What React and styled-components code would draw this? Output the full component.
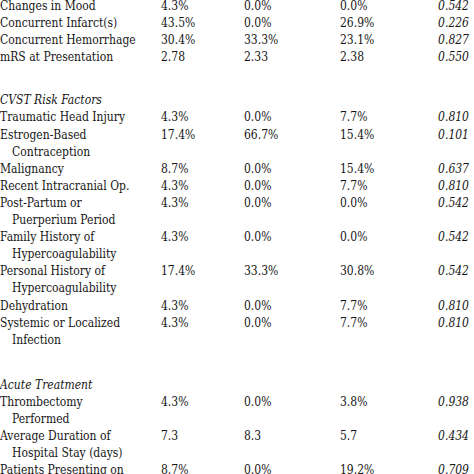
import React from "react";
import styled, { createGlobalStyle } from "styled-components";

const GlobalStyles = createGlobalStyle`
	html, body {
		margin: 0;
		padding: 0;
		background: #ffffff;
	}
	body {
		font-family: "DejaVu Serif", "Liberation Serif", serif;
		color: #161616;
		overflow: hidden;
	}
`;

const Table = styled.div`
	width: 474px;
	margin-top: -2px;
	display: grid;
	grid-template-columns: 161px 83px 96px 1fr 60px;
	font-size: 12px;
	font-stretch: condensed;
	line-height: 17.1px;
`;

const Label = styled.div`
	padding-left: 12px;
	text-indent: -12px;
	white-space: pre-line;
`;

const Cell = styled.div`
	text-align: ${(p) => (p.$right ? "right" : "left")};
	font-style: ${(p) => (p.$italic ? "italic" : "normal")};
	padding-right: ${(p) => (p.$right ? "5px" : "0")};
`;

const Section = styled.div`
	grid-column: 1 / -1;
	font-style: italic;
	margin-top: ${(p) => p.$gap}px;
`;

const groups = [
	{
		rows: [
			["Changes in Mood", "4.3%", "0.0%", "0.0%", "0.542"],
			["Concurrent Infarct(s)", "43.5%", "0.0%", "26.9%", "0.226"],
			["Concurrent Hemorrhage", "30.4%", "33.3%", "23.1%", "0.827"],
			["mRS at Presentation", "2.78", "2.33", "2.38", "0.550"],
		],
	},
	{
		title: "CVST Risk Factors",
		gap: 26,
		rows: [
			["Traumatic Head Injury", "4.3%", "0.0%", "7.7%", "0.810"],
			["Estrogen-Based\nContraception", "17.4%", "66.7%", "15.4%", "0.101"],
			["Malignancy", "8.7%", "0.0%", "15.4%", "0.637"],
			["Recent Intracranial Op.", "4.3%", "0.0%", "7.7%", "0.810"],
			["Post-Partum or\nPuerperium Period", "4.3%", "0.0%", "0.0%", "0.542"],
			["Family History of\nHypercoagulability", "4.3%", "0.0%", "0.0%", "0.542"],
			["Personal History of\nHypercoagulability", "17.4%", "33.3%", "30.8%", "0.542"],
			["Dehydration", "4.3%", "0.0%", "7.7%", "0.810"],
			["Systemic or Localized\nInfection", "4.3%", "0.0%", "7.7%", "0.810"],
		],
	},
	{
		title: "Acute Treatment",
		gap: 28,
		rows: [
			["Thrombectomy\nPerformed", "4.3%", "0.0%", "3.8%", "0.938"],
			["Average Duration of\nHospital Stay (days)", "7.3", "8.3", "5.7", "0.434"],
			["Patients Presenting on\nAnticoagulation", "8.7%", "0.0%", "19.2%", "0.709"],
		],
	},
];

const App = () => {
	return (
		<>
			<GlobalStyles />
			<Table>
				{groups.map((g, gi) => (
					<React.Fragment key={gi}>
						{g.title && <Section $gap={g.gap}>{g.title}</Section>}
						{g.rows.map((r) => (
							<React.Fragment key={r[0]}>
								<Label>{r[0]}</Label>
								<Cell>{r[1]}</Cell>
								<Cell>{r[2]}</Cell>
								<Cell>{r[3]}</Cell>
								<Cell $right $italic>
									{r[4]}
								</Cell>
							</React.Fragment>
						))}
					</React.Fragment>
				))}
			</Table>
		</>
	);
};

export default App;
